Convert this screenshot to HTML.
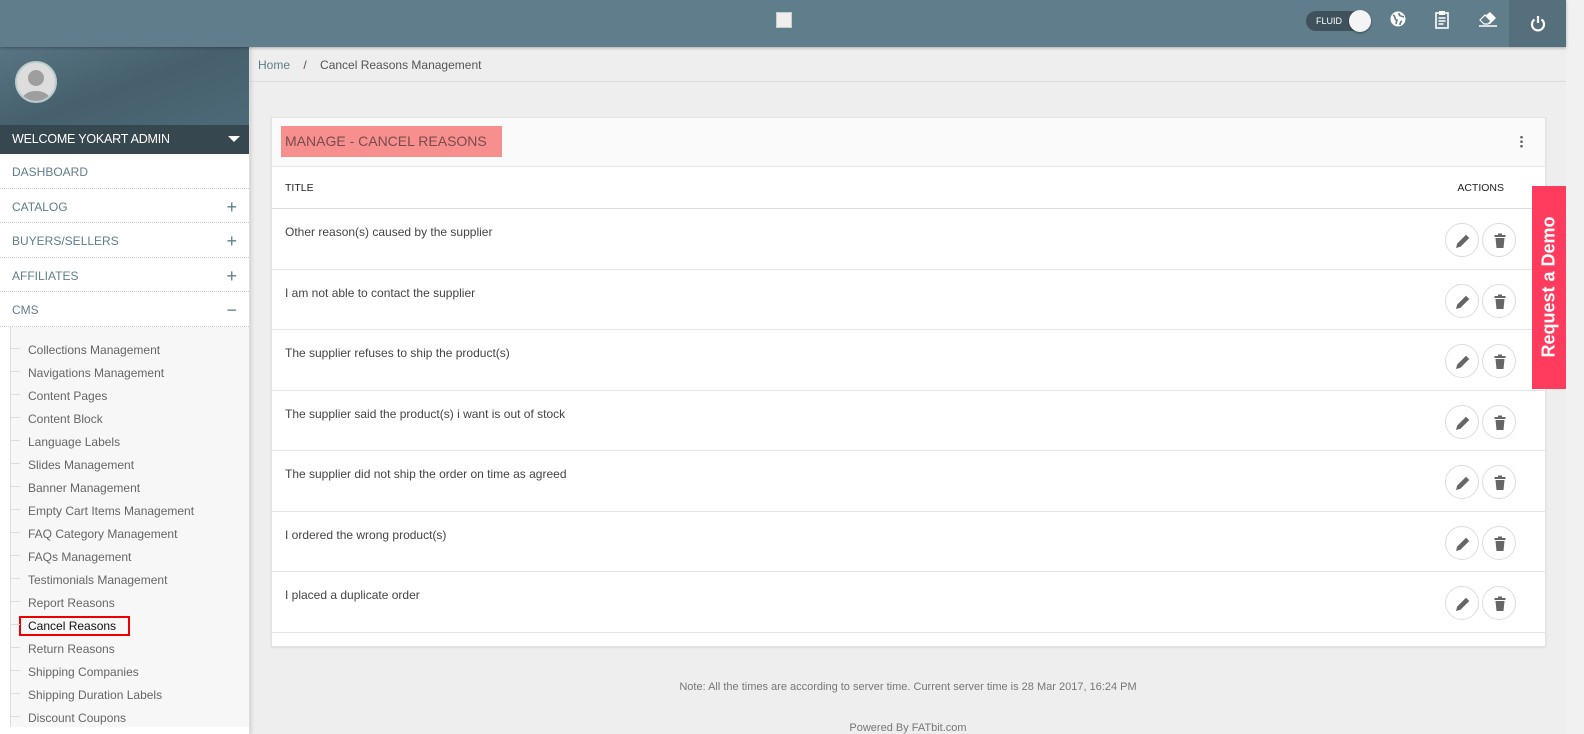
<!DOCTYPE html>
<html><head><meta charset="utf-8"><style>
*{box-sizing:border-box;margin:0;padding:0}
body{width:1584px;height:734px;overflow:hidden;background:#eee;font-family:"Liberation Sans",sans-serif;position:relative}
.hdr{position:absolute;left:0;top:0;width:1566px;height:47px;background:#607d8b;box-shadow:0 1px 3px rgba(0,0,0,.3);z-index:3}
.pwr{position:absolute;right:0;top:0;width:57px;height:47px;background:#566f7c}
.side{position:absolute;left:0;top:47px;width:250px;height:687px;background:#fff;border-right:1px solid #ddd;box-shadow:1px 0 4px rgba(0,0,0,.15);z-index:2}
.prof{height:78px;background:linear-gradient(160deg,#587583 0%,#46606d 50%,#4d6977 100%);position:relative;overflow:hidden}
.av{position:absolute;left:15px;top:14px;width:42px;height:42px;border-radius:50%;background:#ddd;border:2px solid #bcc;overflow:hidden}
.wel{height:29px;background:#37474f;color:#fff;font-size:12.5px;line-height:29px;padding-left:12px;position:relative;letter-spacing:-.2px}
.wel:after{content:"";position:absolute;right:9px;top:11px;border:6px solid transparent;border-top:6px solid #fff;border-bottom:0}
.mi{height:34.5px;line-height:36px;font-size:12px;color:#607d8b;padding-left:12px;border-bottom:1px dotted #ccc;position:relative}
.mi b{position:absolute;right:12px;top:0;font-weight:normal;font-size:18px;color:#607d8b}
.sub{background:#f7f7f7;border-left:1px solid #ddd;margin-left:10px;padding-top:13px;height:400px}
.sub div{font-size:12px;color:#666;height:23px;line-height:20px;padding-left:17px;position:relative}
.sub div:before{content:"";position:absolute;left:0;top:8px;width:9px;border-top:1px solid #ddd}
.sub .act{color:#111}
.sub .act span{border:2px solid #e00;padding:1px 12px 1px 7px;margin-left:-9px}
.bc{position:absolute;left:250px;top:47px;width:1316px;height:35px;border-bottom:1px solid #ddd;font-size:12px;color:#555;line-height:36px;padding-left:8px}
.card{position:absolute;left:271px;top:117px;width:1275px;height:530px;background:#fff;border:1px solid #e2e2e2;box-shadow:0 1px 2px rgba(0,0,0,.08)}
.ch{height:49px;background:#fafafa;border-bottom:1px solid #e8e8e8;position:relative}
.ttl{position:absolute;left:9px;top:8px;height:31px;width:221px;background:#f88f8f;color:#7a4b4b;font-size:14px;line-height:31px;padding-left:4px;white-space:nowrap;overflow:hidden}
.row{height:60.5px;border-bottom:1px solid #e5e5e5;position:relative;font-size:12px;color:#444;padding:16px 13px}
.th{height:42px;border-bottom:1px solid #ddd;font-size:10.5px;color:#222;padding:15px 13px;position:relative}
.btn{position:absolute;top:14px;width:34px;height:34px;border-radius:50%;border:1px solid #ddd;background:#fff}
.btn svg{position:absolute;left:7px;top:7px}
.demo{position:absolute;left:1532px;top:186px;width:34px;height:203px;background:#ff3c5d;z-index:4}
.demo span{position:absolute;left:17px;top:101px;transform:translate(-50%,-50%) rotate(-90deg);white-space:nowrap;color:#fff;font-size:18px;font-weight:bold}
.sb{position:absolute;left:1566px;top:0;width:18px;height:734px;background:#f1f1f1}
</style></head><body>
<div class="hdr">
<div style="position:absolute;left:776px;top:12px;width:16px;height:16px;border:1px solid #ccc;background:#eee"></div>
<div style="position:absolute;left:1306px;top:11px;width:64px;height:20px;border-radius:10px;background:#3f525b;color:#fff;font-size:9px;line-height:20px;padding-left:10px">FLUID</div>
<div style="position:absolute;left:1349px;top:10px;width:22px;height:22px;border-radius:50%;background:#f4f4f4;box-shadow:0 1px 2px rgba(0,0,0,.4)"></div>
<svg style="position:absolute;left:1390px;top:11px" width="16" height="16" viewBox="0 0 16 16"><circle cx="8" cy="8" r="7.5" fill="#fff"/><path d="M3 4q2 1 2 3t2 2l-1 4M9 2q0 3 2 3l3 1M10 14q0-3 2-4" stroke="#607d8b" stroke-width="1.6" fill="none"/></svg>
<svg style="position:absolute;left:1435px;top:10px" width="14" height="19" viewBox="0 0 14 19"><rect x="1" y="3" width="12" height="15" fill="none" stroke="#fff" stroke-width="1.6"/><rect x="4" y="1" width="6" height="4" fill="#fff"/><path d="M3.5 8h7M3.5 11h7M3.5 14h5" stroke="#fff" stroke-width="1.4"/></svg>
<svg style="position:absolute;left:1478px;top:11px" width="20" height="16" viewBox="0 0 20 16"><path d="M12 1l6 6-6 6H6L2 9z" fill="#fff"/><path d="M6 13L2 9l5-5 6 6-3 3z" fill="#607d8b" stroke="#fff" stroke-width="1.2"/><path d="M1 15h18" stroke="#fff" stroke-width="1.5"/></svg>
<div class="pwr"><svg style="position:absolute;left:21px;top:15px" width="16" height="17" viewBox="0 0 16 17"><path d="M4.5 4.5a6 6 0 1 0 7 0" stroke="#fff" stroke-width="2.2" fill="none"/><path d="M8 1v7" stroke="#fff" stroke-width="2.2"/></svg></div>
</div>
<div class="side">
<div class="prof"><div class="av"><svg width="42" height="42" viewBox="0 0 42 42"><circle cx="19" cy="15" r="8" fill="#9e9e9e"/><path d="M3 42q2-14 16-14t17 14z" fill="#9e9e9e"/></svg></div></div>
<div class="wel">WELCOME YOKART ADMIN</div>
<div class="mi">DASHBOARD</div>
<div class="mi">CATALOG<b>+</b></div>
<div class="mi">BUYERS/SELLERS<b>+</b></div>
<div class="mi">AFFILIATES<b>+</b></div>
<div class="mi">CMS<b>−</b></div>
<div class="sub">
<div>Collections Management</div><div>Navigations Management</div><div>Content Pages</div><div>Content Block</div><div>Language Labels</div><div>Slides Management</div><div>Banner Management</div><div>Empty Cart Items Management</div><div>FAQ Category Management</div><div>FAQs Management</div><div>Testimonials Management</div><div>Report Reasons</div><div class="act"><span>Cancel Reasons</span></div><div>Return Reasons</div><div>Shipping Companies</div><div>Shipping Duration Labels</div><div>Discount Coupons</div>
</div>
</div>
<div class="bc"><span style="color:#607d8b">Home</span> &nbsp;&nbsp; / &nbsp;&nbsp; Cancel Reasons Management</div>
<div class="card">
<div class="ch"><div class="ttl">MANAGE - CANCEL REASONS</div>
<div style="position:absolute;right:22px;top:17px;width:3px;height:13px;background:radial-gradient(circle,#666 1.2px,transparent 1.5px) 0 0/3px 4.5px"></div></div>
<div class="th">TITLE<span style="position:absolute;right:41px">ACTIONS</span></div>
<div class="row">Other reason(s) caused by the supplier</div>
<div class="row">I am not able to contact the supplier</div>
<div class="row">The supplier refuses to ship the product(s)</div>
<div class="row">The supplier said the product(s) i want is out of stock</div>
<div class="row">The supplier did not ship the order on time as agreed</div>
<div class="row">I ordered the wrong product(s)</div>
<div class="row">I placed a duplicate order</div>
</div>
<div style="position:absolute;left:250px;width:1316px;top:681px;text-align:center;font-size:11px;color:#777">Note: All the times are according to server time. Current server time is 28 Mar 2017, 16:24 PM</div>
<div style="position:absolute;left:250px;width:1316px;top:722px;text-align:center;font-size:11px;color:#777">Powered By FATbit.com</div>
<div class="demo"><span>Request a Demo</span></div>
<div class="sb"></div>
<script>
document.querySelectorAll('.card .row').forEach(r=>{
r.insertAdjacentHTML('beforeend','<div class="btn" style="right:66px"><svg width="20" height="20" viewBox="0 0 20 20"><path d="M3 17l1.2-4.5L13 3.7l3.3 3.3-8.8 8.8z" fill="#666"/></svg></div><div class="btn" style="right:29px"><svg width="20" height="20" viewBox="0 0 20 20"><rect x="4.5" y="4" width="11" height="2" fill="#666"/><rect x="8" y="2.5" width="4" height="2" fill="#666"/><path d="M5.5 7h9l-1 10h-7z" fill="#666"/></svg></div>');
});
</script>
</body></html>
